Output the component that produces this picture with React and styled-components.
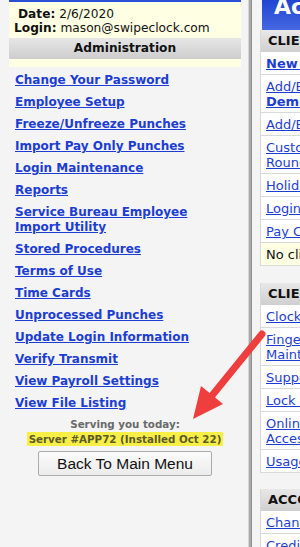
import React from 'react';
import styled, { createGlobalStyle } from 'styled-components';

const GlobalStyle = createGlobalStyle`
  html, body { margin: 0; padding: 0; }
  body {
    background: #f4f4f4;
    font-family: "DejaVu Sans", Verdana, sans-serif;
    overflow: hidden;
  }
`;

const Page = styled.div`
  position: relative;
  display: flex;
  width: 300px;
  height: 547px;
  overflow: hidden;
`;

const LeftColumn = styled.div`
  width: 248px;
  flex: none;
  padding: 0 7px 0 9px;
  box-sizing: border-box;
  background: #f4f4f4;
`;

const TitleEdge = styled.div`
  height: 2px;
  background: #2a4fd6;
`;

const InfoBox = styled.div`
  background: #ffffe3;
  padding: 5px 4px 3px 5px;
  font-size: 12.2px;
  line-height: 14px;
  color: #111;
  white-space: nowrap;
`;

const InfoLine = styled.div`
  padding-left: ${p => p.$indent || 0}px;
  b { font-weight: bold; }
`;

const SectionHead = styled.div`
  height: 21px;
  line-height: 21px;
  text-align: center;
  font-size: 12.2px;
  font-weight: bold;
  color: #111;
  background: linear-gradient(#e6e6e6, #cdcdcd);
`;

const CreamStrip = styled.div`
  height: 8px;
  background: #ffffe3;
`;

const LinkList = styled.ul`
  list-style: none;
  margin: 0;
  padding: 6px 0 0 6px;
`;

const LinkItem = styled.li`
  margin-bottom: 7px;
  font-size: 12px;
  line-height: 15px;
  font-weight: bold;
  a {
    color: #1c3dd4;
    text-decoration: underline;
  }
`;

const Serving = styled.div`
  margin-top: 1px;
  text-align: center;
  font-size: 10.3px;
  line-height: 13px;
  font-weight: bold;
  color: #6a6a6a;
`;

const ServerTag = styled.span`
  display: inline-block;
  margin-top: 1px;
  padding: 0 2px;
  line-height: 14px;
  background: #f7ef45;
  color: #5c5a2c;
`;

const ButtonRow = styled.div`
  display: flex;
  justify-content: center;
  margin-top: 5px;
`;

const MenuButton = styled.button`
  width: 174px;
  height: 25px;
  padding: 0;
  font-family: "Liberation Sans", Arial, sans-serif;
  font-size: 15.5px;
  color: #111;
  background: linear-gradient(#fbfbfb, #ececec);
  border: 1px solid #ababab;
  border-radius: 2px;
`;

const Divider = styled.div`
  width: 4px;
  flex: none;
  background: #a9a9a9;
  border-left: 1px solid #d6d6d6;
  border-right: 1px solid #8e8e8e;
  box-sizing: border-box;
`;

const RightColumn = styled.div`
  flex: 1;
  min-width: 0;
  padding-left: 8px;
  background: #f4f4f4;
  overflow: hidden;
`;

const BlueTitle = styled.div`
  width: 240px;
  height: 30px;
  margin-left: 2px;
  padding-left: 12px;
  box-sizing: border-box;
  background: linear-gradient(#1f45d2, #4668e2);
  color: #fff;
  font-size: 22px;
  font-weight: bold;
  line-height: 14px;
  white-space: nowrap;
  overflow: hidden;
`;

const Card = styled.div`
  width: 240px;
  margin-bottom: ${p => p.$gap || 16}px;
  border-left: 1px solid #d9d9d9;
  background: #fff;
`;

const CardHead = styled.div`
  height: 22px;
  line-height: 22px;
  padding-left: 7px;
  font-size: 13px;
  font-weight: bold;
  color: #111;
  background: linear-gradient(#e8e8e8, #cfcfcf);
  white-space: nowrap;
`;

const Cell = styled.div`
  padding: 4px 5px 3px;
  font-size: 13px;
  line-height: 15px;
  border-bottom: 1px solid #d9d9d9;
  white-space: nowrap;
  background: ${p => (p.$note ? '#ffffe3' : '#fff')};
  color: #111;
  a {
    color: #1c3dd4;
    text-decoration: underline;
    font-weight: ${p => (p.$bold ? 'bold' : 'normal')};
  }
  a b { font-weight: bold; }
`;

const Arrow = styled.svg`
  position: absolute;
  left: 0;
  top: 0;
  pointer-events: none;
`;

const adminLinks = [
  ['Change Your Password'],
  ['Employee Setup'],
  ['Freeze/Unfreeze Punches'],
  ['Import Pay Only Punches'],
  ['Login Maintenance'],
  ['Reports'],
  ['Service Bureau Employee', 'Import Utility'],
  ['Stored Procedures'],
  ['Terms of Use'],
  ['Time Cards'],
  ['Unprocessed Punches'],
  ['Update Login Information'],
  ['Verify Transmit'],
  ['View Payroll Settings'],
  ['View File Listing'],
];

const cards = [
  {
    title: 'CLIENT SETUP',
    gap: 17,
    rows: [
      { lines: ['New Client'], bold: true },
      { lines: ['Add/Edit Client', <b key="d">Demographics</b>] },
      { lines: ['Add/Edit Departments'] },
      { lines: ['Custom Client', 'Rounding Rules'] },
      { lines: ['Holiday Schedule'] },
      { lines: ['Login Maintenance'] },
      { lines: ['Pay Codes'] },
      { lines: ['No client selected'], note: true },
    ],
  },
  {
    title: 'CLIENT TOOLS',
    gap: 16,
    rows: [
      { lines: ['Clock Setup'] },
      { lines: ['Fingerprint', 'Maintenance'] },
      { lines: ['Support Request'] },
      { lines: ['Lock Out Users'] },
      { lines: ['Online Employee', 'Access'] },
      { lines: ['Usage Report'] },
    ],
  },
  {
    title: 'ACCOUNT',
    rows: [
      { lines: ['Change Password'] },
      { lines: ['Credit Card Info'] },
    ],
  },
];

const App = () => {
  return (
    <Page>
      <GlobalStyle />
      <LeftColumn>
        <TitleEdge />
        <InfoBox>
          <InfoLine $indent={4}><b>Date:</b> 2/6/2020</InfoLine>
          <InfoLine><b>Login:</b> mason@swipeclock.com</InfoLine>
        </InfoBox>
        <SectionHead>Administration</SectionHead>
        <CreamStrip />
        <LinkList>
          {adminLinks.map(lines => (
            <LinkItem key={lines[0]}>
              <a href="#">
                {lines.map((l, i) => (
                  <React.Fragment key={i}>
                    {i > 0 && <br />}
                    {l}
                  </React.Fragment>
                ))}
              </a>
            </LinkItem>
          ))}
        </LinkList>
        <Serving>
          Serving you today:
          <br />
          <ServerTag>Server #APP72 (Installed Oct 22)</ServerTag>
        </Serving>
        <ButtonRow>
          <MenuButton>Back To Main Menu</MenuButton>
        </ButtonRow>
      </LeftColumn>
      <Divider />
      <RightColumn>
        <BlueTitle>Account Admin</BlueTitle>
        {cards.map(card => (
          <Card key={card.title} $gap={card.gap}>
            <CardHead>{card.title}</CardHead>
            {card.rows.map((row, i) => (
              <Cell key={i} $note={row.note} $bold={row.bold}>
                {row.note ? (
                  row.lines[0]
                ) : (
                  <a href="#">
                    {row.lines.map((l, j) => (
                      <React.Fragment key={j}>
                        {j > 0 && <br />}
                        {l}
                      </React.Fragment>
                    ))}
                  </a>
                )}
              </Cell>
            ))}
          </Card>
        ))}
      </RightColumn>
      <Arrow width="300" height="547" viewBox="0 0 300 547">
        <line x1="262" y1="334" x2="210" y2="398" stroke="#ef3e3e" strokeWidth="7" strokeLinecap="round" />
        <polygon points="193,419 201,386 223,404" fill="#ef3e3e" />
      </Arrow>
    </Page>
  );
};

export default App;
